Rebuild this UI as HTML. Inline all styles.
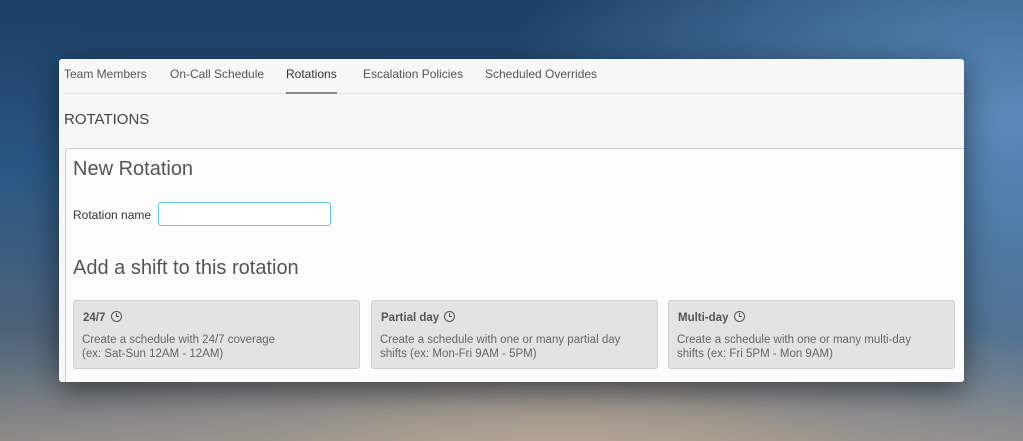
<!DOCTYPE html>
<html><head><style>
body{margin:0;width:1023px;height:441px;overflow:hidden;position:relative;font-family:"Liberation Sans",sans-serif;
background:
radial-gradient(ellipse 650px 200px at 560px 480px,#c2ad95 0%,rgba(170,160,150,0.5) 50%,rgba(0,0,0,0) 100%),
radial-gradient(ellipse 500px 350px at 1000px 120px,#5b8ab8 0%,rgba(80,130,180,0) 100%),
linear-gradient(180deg,#1b3f66 0%,#2b5784 40%,#4d637a 75%,#8a8885 100%);}
.win{position:absolute;left:59px;top:59px;width:905px;height:323px;background:#f7f7f7;border-radius:3px;overflow:hidden;box-shadow:0 8px 30px rgba(0,0,0,0.5);}
.tabs{position:absolute;left:5px;top:0;right:0;height:34px;border-bottom:1px solid #e4e4e4;}
.tab{position:absolute;top:8px;font-size:12px;color:#555;}
.tab.a{color:#333;}
.ul{position:absolute;left:222px;top:33px;width:51px;height:2px;background:#888;}
h2{position:absolute;left:5px;top:52px;margin:0;font-size:15px;font-weight:normal;color:#444;}
.panel{position:absolute;left:6px;top:89px;width:920px;height:250px;background:#fcfcfc;border:1px solid #ccc;border-radius:3px;}
.t1{position:absolute;left:7px;top:9px;font-size:20px;color:#555;}
.lbl{position:absolute;left:7px;top:59px;font-size:12px;color:#333;}
.inp{position:absolute;left:92px;top:53px;width:171px;height:22px;border:1px solid #5cc8ea;border-radius:3px;background:#fff;}
.t2{position:absolute;left:7px;top:108px;font-size:20px;color:#555;}
.card{position:absolute;top:151px;width:285px;height:67px;background:#e3e3e3;border:1px solid #d0d0d0;border-radius:3px;}
.card b{position:absolute;left:9px;top:10px;font-size:11.5px;color:#555;}
.card p{position:absolute;left:8px;top:32px;margin:0;font-size:11.5px;line-height:14px;color:#666;}
.clk{display:inline-block;width:9px;height:9px;border:1.2px solid #555;border-radius:50%;vertical-align:-1px;margin-left:2px;position:relative}
.clk:after{content:"";position:absolute;left:4px;top:1px;width:2px;height:3px;border-left:1.2px solid #555;border-bottom:1.2px solid #555;}
</style></head><body>
<div class="win">
<div class="tabs">
<span class="tab" style="left:0">Team Members</span>
<span class="tab" style="left:106px">On-Call Schedule</span>
<span class="tab a" style="left:222px">Rotations</span>
<span class="tab" style="left:299px">Escalation Policies</span>
<span class="tab" style="left:421px">Scheduled Overrides</span>
<div class="ul"></div>
</div>
<h2>ROTATIONS</h2>
<div class="panel">
<div class="t1">New Rotation</div>
<div class="lbl">Rotation name</div>
<div class="inp"></div>
<div class="t2">Add a shift to this rotation</div>
<div class="card" style="left:7px"><b>24/7 <span class="clk"></span></b><p>Create a schedule with 24/7 coverage<br>(ex: Sat-Sun 12AM - 12AM)</p></div>
<div class="card" style="left:305px"><b>Partial day <span class="clk"></span></b><p>Create a schedule with one or many partial day<br>shifts (ex: Mon-Fri 9AM - 5PM)</p></div>
<div class="card" style="left:602px"><b>Multi-day <span class="clk"></span></b><p>Create a schedule with one or many multi-day<br>shifts (ex: Fri 5PM - Mon 9AM)</p></div>
</div>
</div>
</body></html>
